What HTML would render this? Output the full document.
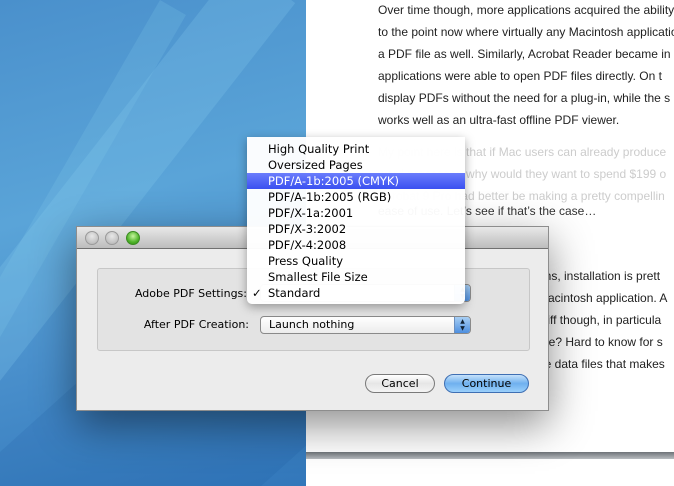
<!DOCTYPE html>
<html><head><meta charset="utf-8"><style>
*{margin:0;padding:0;box-sizing:border-box}
html,body{width:674px;height:486px;overflow:hidden}
body{position:relative;background:#fff;font-family:"Liberation Sans",sans-serif}
#desk{position:absolute;left:0;top:0;width:306px;height:486px;background:linear-gradient(165deg,#4a90cc 0%,#5aa4d8 40%,#4a90cc 65%,#3277ba 100%);overflow:hidden}
.ray{position:absolute;transform-origin:0 0}
#page{position:absolute;left:306px;top:0;width:368px;height:452px;background:#fff}
#pshadow{position:absolute;left:306px;top:452px;width:368px;height:7px;background:linear-gradient(#6e7378,#b8bcc0)}
.t{position:absolute;left:378px;font-size:12px;color:#222;white-space:nowrap;line-height:14px}
.f{color:#ccc}
#dlg{position:absolute;left:76px;top:226px;width:473px;height:185px;background:#ececec;box-shadow:0 14px 40px rgba(0,0,0,.45);border:1px solid #8d8d8d}
#tb{position:absolute;left:0;top:0;right:0;height:22px;background:linear-gradient(#e8e8e8,#bdbdbd);border-bottom:1px solid #707070}
.lt{position:absolute;top:4px;width:14px;height:14px;border-radius:50%;background:radial-gradient(circle at 50% 35%,#e8e8e8,#b0b0b0);border:1px solid #9a9a9a}
#grp{position:absolute;left:20px;top:41px;width:433px;height:83px;background:#e3e3e3;border:1px solid #c7c7c7;border-radius:3px}
.lbl{position:absolute;font-size:11px;color:#000;font-family:"DejaVu Sans",sans-serif;text-align:right;width:120px}
.pop{position:absolute;border:1px solid #8a8a8a;border-radius:4px;background:linear-gradient(#fff,#ececec);font-size:11px;font-family:"DejaVu Sans",sans-serif;padding-left:8px;line-height:16px}
.arr{position:absolute;right:0;top:0;width:16px;height:100%;background:linear-gradient(#a8cff4,#4d8fe0);border-left:1px solid #6a8fbf;border-radius:0 3px 3px 0;color:#123;font-size:6px;text-align:center;line-height:7px;padding-top:1px}
.btn{position:absolute;height:19px;border-radius:10px;font-size:11px;text-align:center;line-height:17px;font-family:"DejaVu Sans",sans-serif}
#menu{position:absolute;left:247px;top:137px;width:218px;height:167px;background:rgba(255,255,255,0.97);border-radius:0 0 5px 5px;box-shadow:0 3px 10px rgba(0,0,0,.35);font-family:"DejaVu Sans",sans-serif;font-size:11.5px;padding-top:4px}
#menu div{height:16px;line-height:16px;padding-left:21px;color:#000;position:relative}
#menu .hl{background:linear-gradient(#6a7dfc,#3a50f0);color:#fff}
</style></head><body>
<div id="desk">
<div class="ray" style="left:240px;top:-40px;width:70px;height:520px;transform:rotate(38deg);background:rgba(140,210,240,.22)"></div>
<div class="ray" style="left:160px;top:0px;width:30px;height:560px;transform:rotate(30deg);background:rgba(140,210,240,.18)"></div>
<div class="ray" style="left:-20px;top:470px;width:500px;height:200px;transform:rotate(-42deg);background:rgba(20,70,150,.12)"></div>
</div>
<div id="page"></div>
<div id="pshadow"></div>
<div class="t" style="top:3px">Over time though, more applications acquired the ability</div>
<div class="t" style="top:25px">to the point now where virtually any Macintosh applicatio</div>
<div class="t" style="top:47px">a PDF file as well. Similarly, Acrobat Reader became in</div>
<div class="t" style="top:69px">applications were able to open PDF files directly. On t</div>
<div class="t" style="top:91px">display PDFs without the need for a plug-in, while the s</div>
<div class="t" style="top:113px">works well as an ultra-fast offline PDF viewer.</div>
<div class="t f" style="top:145px">My point here is that if Mac users can already produce</div>
<div class="t f" style="top:167px">word processor, why would they want to spend $199 o</div>
<div class="t f" style="top:189px">Acrobat 9 Pro had better be making a pretty compellin</div>
<div class="t" style="top:204px;color:#333">ease of use. Let’s see if that’s the case…</div>
<div class="t" style="top:269px;left:538px">ons, installation is prett</div>
<div class="t" style="top:291px;left:538px">Macintosh application. A</div>
<div class="t" style="top:313px;left:538px">stiff though, in particula</div>
<div class="t" style="top:335px;left:538px">are? Hard to know for s</div>
<div class="t" style="top:357px;left:538px">he data files that makes</div>
<div id="dlg">
 <div id="tb">
  <div class="lt" style="left:8px"></div>
  <div class="lt" style="left:28px"></div>
  <div class="lt" style="left:49px;background:radial-gradient(circle at 50% 35%,#c8f5a0,#4fb42a 60%,#2f8a12);border-color:#3b8a22"></div>
 </div>
 <div id="grp"></div>
 <div class="lbl" style="left:50px;top:60px">Adobe PDF Settings:</div>
 <div class="pop" style="left:183px;top:57px;width:211px;height:18px"><div class="arr">▲<br>▼</div></div>
 <div class="lbl" style="left:52px;top:91px">After PDF Creation:</div>
 <div class="pop" style="left:183px;top:89px;width:211px;height:18px">Launch nothing<div class="arr">▲<br>▼</div></div>
 <div class="btn" style="left:288px;top:147px;width:70px;border:1px solid #7a7a7a;background:linear-gradient(#fff,#e6e6e6 50%,#f4f4f4)">Cancel</div>
 <div class="btn" style="left:367px;top:147px;width:85px;border:1px solid #3f6fb3;background:linear-gradient(#c6e2fb,#6fb0ef 50%,#9ad0fb)">Continue</div>
</div>
<div id="menu">
<div>High Quality Print</div>
<div>Oversized Pages</div>
<div class="hl">PDF/A-1b:2005 (CMYK)</div>
<div>PDF/A-1b:2005 (RGB)</div>
<div>PDF/X-1a:2001</div>
<div>PDF/X-3:2002</div>
<div>PDF/X-4:2008</div>
<div>Press Quality</div>
<div>Smallest File Size</div>
<div><span style="position:absolute;left:5px">✓</span>Standard</div>
</div>
</body></html>
